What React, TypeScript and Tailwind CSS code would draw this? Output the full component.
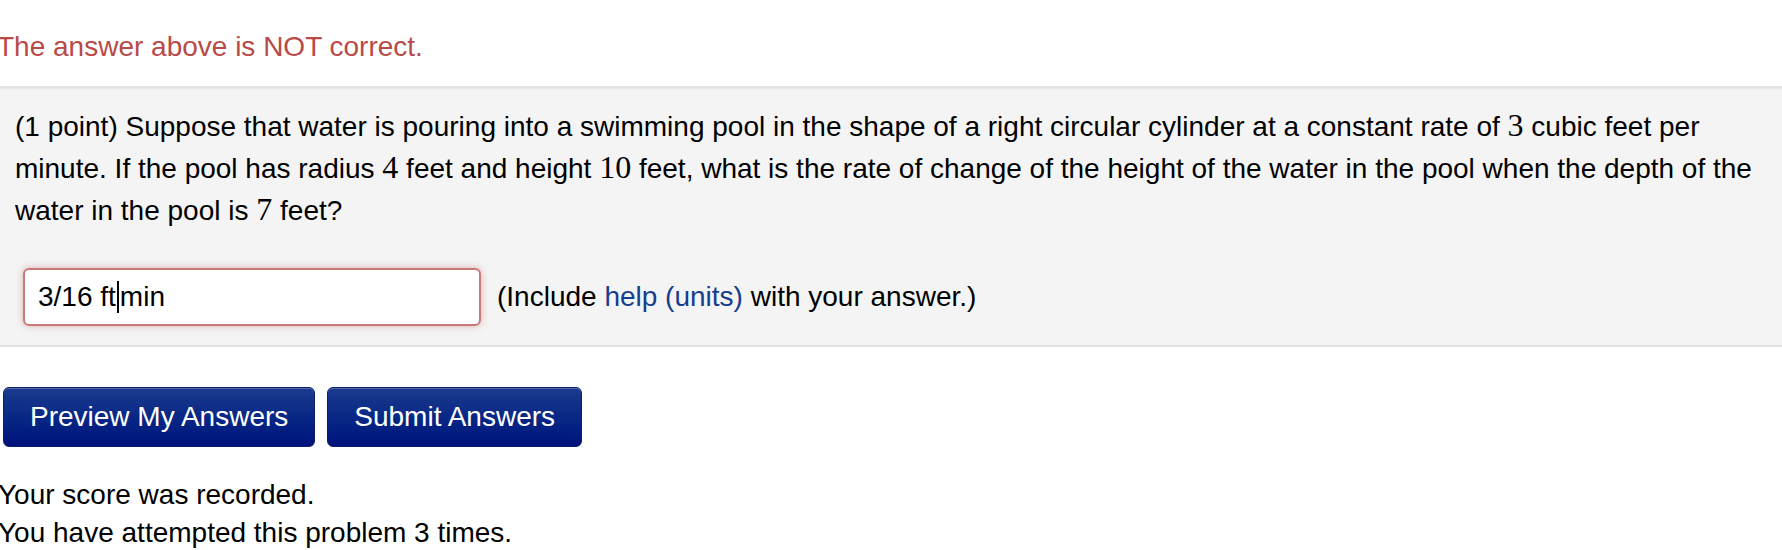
import React from "react";

const sans = "font-['Liberation_Sans','Helvetica_Neue',Arial,sans-serif]";
const mathFont = "font-['Liberation_Serif','DejaVu_Serif',serif]";

function M({ children }: { children: React.ReactNode }) {
  return <span className={`${mathFont} text-[32px] leading-none`}>{children}</span>;
}

function NavyButton({ children }: { children: React.ReactNode }) {
  return (
    <button
      type="button"
      className="h-[60px] rounded-[6px] border border-[#0a1e6a] bg-gradient-to-b from-[#1a3a8e] to-[#00107c] px-[26px] text-[28px] text-white shadow-[inset_0_1px_0_rgba(255,255,255,0.25)]"
    >
      {children}
    </button>
  );
}

export default function App() {
  return (
    <div className={`${sans} min-h-[550px] w-[1782px] overflow-hidden bg-white text-black`}>
      <div className="-ml-[3px] pt-[26px] text-[28px] leading-[42px] text-[#b94a48]">
        The answer above is NOT correct.
      </div>

      <div className="mt-[18px] border-y-2 border-[#e2e2e2] bg-[#f4f4f4] pb-[19px] pl-[15px] pt-[18px] shadow-[inset_0_1px_1px_rgba(0,0,0,0.05)]">
        <p className="text-[28px] leading-[42px]">
          (1 point) Suppose that water is pouring into a swimming pool in the shape of a right circular
          cylinder at a constant rate of <M>3</M> cubic feet per minute. If the pool has radius <M>4</M>{" "}
          feet and height <M>10</M> feet, what is the rate of change of the height of the water in the pool
          when the depth of the water in the pool is <M>7</M> feet?
        </p>

        <div className="mt-[36px] flex items-center gap-[16px] pl-[8px]">
          <div className="flex h-[58px] w-[458px] items-center rounded-[6px] border-2 border-[#c97b79] bg-white pl-[13px] text-[28px] shadow-[0_0_7px_rgba(213,147,146,0.7)]">
            <span>3/16 ft</span>
            <span className="mx-[1px] h-[32px] w-[2px] bg-black" />
            <span>min</span>
          </div>
          <span className="text-[28px] leading-[42px]">
            (Include <a className="text-[#173d8f]">help (units)</a> with your answer.)
          </span>
        </div>
      </div>

      <div className="ml-[3px] mt-[40px] flex gap-[12px]">
        <NavyButton>Preview My Answers</NavyButton>
        <NavyButton>Submit Answers</NavyButton>
      </div>

      <div className="-ml-[2px] mt-[29px] text-[28px] leading-[38px]">
        <div>Your score was recorded.</div>
        <div>You have attempted this problem 3 times.</div>
      </div>
    </div>
  );
}
